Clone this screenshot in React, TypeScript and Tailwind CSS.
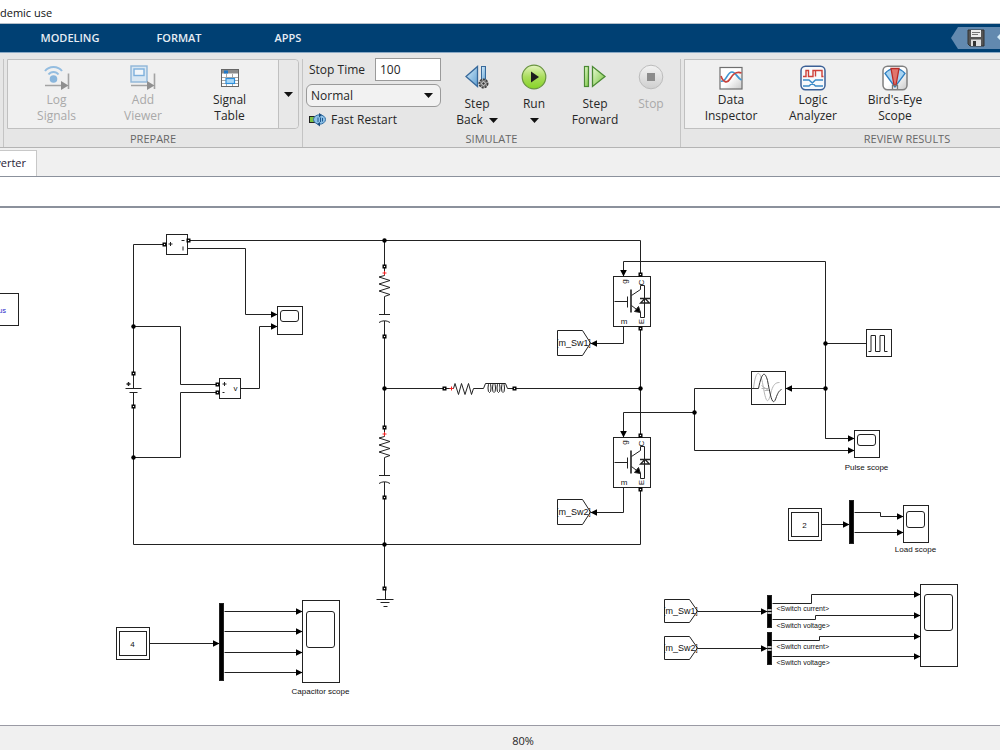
import type { ReactNode } from 'react';

function Caret() {
  return (
    <svg width="9" height="5" viewBox="0 0 9 5" aria-hidden="true">
      <path d="M0 0H9L4.5 5Z" fill="#111" />
    </svg>
  );
}

/* ---------- toolstrip icons ---------- */

function LogSignalsIcon() {
  return (
    <svg width="26" height="26" viewBox="0 0 26 26" fill="none">
      <g stroke="#94bde0" strokeWidth="2">
        <path d="M1 6C5 0.500 14 0.500 18 6" />
        <path d="M4.500 9.500C7 6 12 6 14.500 9.500" />
      </g>
      <circle cx="9.500" cy="14" r="3.800" fill="#8ab6dc" />
      <path d="M1 20.500H18M24.500 8.500V24" stroke="#a3a3a3" strokeWidth="1.600" />
      <path d="M17 16L24.500 20.500L17 25Z" fill="#8f8f8f" />
    </svg>
  );
}

function AddViewerIcon() {
  return (
    <svg width="26" height="26" viewBox="0 0 26 26" fill="none">
      <rect x="1" y="1" width="16" height="16" fill="#d8e7f3" stroke="#8fb6d8" strokeWidth="1.400" />
      <rect x="4" y="4" width="10" height="6.500" fill="#f1f6fa" stroke="#7db0dc" strokeWidth="1.400" />
      <path d="M1 20.500H18M24.500 8.500V24" stroke="#a3a3a3" strokeWidth="1.600" />
      <path d="M17 16L24.500 20.500L17 25Z" fill="#8f8f8f" />
    </svg>
  );
}

function SignalTableIcon() {
  return (
    <svg width="18" height="26" viewBox="0 0 18 26" fill="none">
      <rect x="0.500" y="4.500" width="17" height="17" fill="#fff" stroke="#666" />
      <rect x="1" y="5" width="16" height="3.500" fill="#8c8c8c" />
      <rect x="3" y="5.500" width="4" height="3" fill="#1f78c8" />
      <path d="M1 12.500H17M1 15.500H17M1 18.500H17M5.500 9V21M11.500 9V21" stroke="#a5a5a5" />
      <rect x="5" y="13.500" width="8.500" height="5" fill="#a9d8f8" stroke="#2d8fdc" strokeWidth="1.200" />
    </svg>
  );
}

function StepBackIcon() {
  return (
    <svg width="26" height="26" viewBox="0 0 26 26" fill="none">
      <defs>
        <linearGradient id="blueFace" x1="0" y1="0" x2="1" y2="1">
          <stop offset="0" stopColor="#d8eefb" />
          <stop offset="1" stopColor="#5f9fd2" />
        </linearGradient>
      </defs>
      <path d="M13.500 2.500V22.500L2 12.500Z" fill="url(#blueFace)" stroke="#37699b" strokeWidth="1.300" />
      <rect x="17.500" y="2.500" width="4" height="15" fill="url(#blueFace)" stroke="#37699b" />
      <circle cx="19.500" cy="19.500" r="4.200" fill="#b9b9b9" stroke="#3d3d3d" strokeWidth="1.600" strokeDasharray="2.200 0.900" />
      <circle cx="19.500" cy="19.500" r="2.800" fill="#d6d6d6" stroke="#555" />
      <circle cx="19.500" cy="19.500" r="1.200" fill="#333" />
    </svg>
  );
}

function RunIcon() {
  return (
    <svg width="26" height="26" viewBox="0 0 26 26" fill="none">
      <defs>
        <linearGradient id="runFace" x1="0" y1="0" x2="0" y2="1">
          <stop offset="0" stopColor="#e4f4c0" />
          <stop offset="0.500" stopColor="#aadd5c" />
          <stop offset="1" stopColor="#86d326" />
        </linearGradient>
      </defs>
      <circle cx="13" cy="13" r="11.800" fill="url(#runFace)" stroke="#6a9540" strokeWidth="1.200" />
      <path d="M10 7.500L18 13L10 18.500Z" fill="#1d1d1d" />
    </svg>
  );
}

function StepForwardIcon() {
  return (
    <svg width="26" height="26" viewBox="0 0 26 26" fill="none">
      <defs>
        <linearGradient id="greenFace" x1="0" y1="0" x2="1" y2="1">
          <stop offset="0" stopColor="#eafbd6" />
          <stop offset="1" stopColor="#76c33c" />
        </linearGradient>
      </defs>
      <rect x="2.500" y="2.500" width="4" height="20" fill="url(#greenFace)" stroke="#4b8a34" strokeWidth="1.200" />
      <path d="M10.500 2.500V22.500L23 12.500Z" fill="url(#greenFace)" stroke="#4b8a34" strokeWidth="1.300" />
    </svg>
  );
}

function StopIcon() {
  return (
    <svg width="26" height="26" viewBox="0 0 26 26" fill="none">
      <defs>
        <linearGradient id="stopFace" x1="0" y1="0" x2="0" y2="1">
          <stop offset="0" stopColor="#f3f3f3" />
          <stop offset="1" stopColor="#cfcfcf" />
        </linearGradient>
      </defs>
      <circle cx="13" cy="13" r="11.800" fill="url(#stopFace)" stroke="#bcbcbc" />
      <rect x="9" y="9" width="8" height="8" fill="#8c8c8c" />
    </svg>
  );
}

function FastRestartIcon() {
  return (
    <svg width="17" height="14" viewBox="0 0 17 14" fill="none">
      <rect x="0.500" y="3.500" width="5" height="6" fill="#7cc143" stroke="#222" />
      <ellipse cx="10.500" cy="6.500" rx="6" ry="4.700" fill="#8cbfe6" stroke="#2f6da3" />
      <path d="M10 0L13 2L10 4.500ZM11 9L8 11.300L11 13.500Z" fill="#1d4f80" />
      <path d="M9 4.500V9M11.500 4.500V9M13.500 5V8.500" stroke="#1f5a92" />
    </svg>
  );
}

function DataInspectorIcon() {
  return (
    <svg width="26" height="26" viewBox="0 0 26 26" fill="none">
      <defs>
        <linearGradient id="paper" x1="0" y1="0" x2="1" y2="1">
          <stop offset="0.500" stopColor="#fff" />
          <stop offset="1" stopColor="#c9c9c9" />
        </linearGradient>
      </defs>
      <rect x="2" y="2.500" width="22" height="21.500" fill="url(#paper)" stroke="#6f6f6f" strokeWidth="1.200" />
      <path d="M3 16C8 18 9 7 14 7C18 7 19 13 23.500 15" stroke="#3e96d2" strokeWidth="1.700" />
      <path d="M3 11C5 17 9 19 12 14C15 9 18 6 23.500 8" stroke="#c8433c" strokeWidth="1.700" />
    </svg>
  );
}

function LogicAnalyzerIcon() {
  return (
    <svg width="26" height="26" viewBox="0 0 26 26" fill="none">
      <rect x="1" y="1.200" width="24" height="23.600" rx="4.500" fill="#f7f9fb" stroke="#3c6096" strokeWidth="1.500" />
      <path d="M3 11.500H6V5.500H8.500V11.500H13V5.500H15.500M15.500 5.500V11.500M18 5.500H22V11.500H23.500M15.500 5.500H18" stroke="#cf4038" strokeWidth="1.400" />
      <path d="M3 15H9L15.500 21H23M3 21H9L15.500 15H23" stroke="#3c8bc8" strokeWidth="1.500" />
    </svg>
  );
}

function BirdsEyeIcon() {
  return (
    <svg width="26" height="26" viewBox="0 0 26 26" fill="none">
      <rect x="1" y="1.200" width="24" height="23.600" rx="4.500" fill="url(#paper)" stroke="#808080" strokeWidth="1.500" />
      <path d="M13 22L3 8.500C8 2 18 2 23 8.500Z" fill="#a8d4f2" stroke="#2f7fc0" strokeWidth="1.300" />
      <path d="M12 20L9 3.500H17L14 20Z" fill="#e0756c" stroke="#b92b26" strokeWidth="1.300" />
      <path d="M10.500 24V20.500H15.500V24" stroke="#777" strokeWidth="1.300" />
    </svg>
  );
}

/* ---------- toolstrip parts ---------- */

function GalleryItem({ icon, lines, disabled, width }: { icon: ReactNode; lines: string[]; disabled?: boolean; width: string }) {
  return (
    <button disabled={disabled} className={`flex flex-col items-center pt-1 text-[12px] leading-4 text-[#262626] disabled:text-[#a9a9a9] ${width}`}>
      <span className="flex h-7 items-center">{icon}</span>
      {lines.map((line) => (
        <span key={line}>{line}</span>
      ))}
    </button>
  );
}

function SimButton({ icon, first, second, disabled, menu, width }: { icon: ReactNode; first: string; second?: string; disabled?: boolean; menu?: boolean; width: string }) {
  return (
    <button disabled={disabled} className={`flex flex-col items-center text-[12px] leading-4 text-[#262626] disabled:text-[#a9a9a9] ${width}`}>
      <span className="mb-[5px] flex h-7 items-center">{icon}</span>
      <span>{first}</span>
      <span className="flex h-4 items-center gap-[6px]">
        {second}
        {menu && <Caret />}
      </span>
    </button>
  );
}

function Section({ title, className, children }: { title: string; className: string; children: ReactNode }) {
  return (
    <section className={`mt-[6px] flex shrink-0 flex-col border-l border-[#c4c4c4] ${className}`}>
      <div className="h-[73px]">{children}</div>
      <h2 className="pt-px text-center text-[11px] leading-4 text-[#666]">{title}</h2>
    </section>
  );
}

/* ---------- block diagram parts ---------- */

type Point = [number, number];

function Wire({ points }: { points: Point[] }) {
  return <polyline points={points.map((p) => p.join(',')).join(' ')} />;
}

function Arrow({ points }: { points: Point[] }) {
  const [x, y] = points[points.length - 1];
  const [px, py] = points[points.length - 2];
  const angle = (Math.atan2(y - py, x - px) * 180) / Math.PI;
  return (
    <>
      <Wire points={points} />
      <path d="M0 0L-6.500 -3.300V3.300Z" fill="#000" stroke="none" transform={`translate(${x} ${y}) rotate(${angle})`} />
    </>
  );
}

function Dot({ x, y }: { x: number; y: number }) {
  return <circle cx={x} cy={y} r="2.200" fill="#000" stroke="none" />;
}

function Port({ x, y }: { x: number; y: number }) {
  return <rect x={x - 1.3} y={y - 1.3} width="2.600" height="2.600" fill="#fff" stroke="#000" strokeWidth="1.400" />;
}

function Label({ x, y, children, anchor = 'middle', size = 8, color = '#111' }: { x: number; y: number; children: ReactNode; anchor?: 'middle' | 'start' | 'end'; size?: number; color?: string }) {
  return (
    <text x={x} y={y} fontSize={size} textAnchor={anchor} fill={color} stroke="none">
      {children}
    </text>
  );
}

function Scope({ x, y, w, h, screen }: { x: number; y: number; w: number; h: number; screen: [number, number, number, number] }) {
  return (
    <>
      <rect x={x} y={y} width={w} height={h} fill="#fff" />
      <rect x={screen[0]} y={screen[1]} width={screen[2]} height={screen[3]} rx="2.500" />
    </>
  );
}

function Constant({ x, y, value }: { x: number; y: number; value: string }) {
  return (
    <>
      <rect x={x} y={y} width="33" height="32" />
      <rect x={x + 3} y={y + 4} width="27" height="24" />
      <Label x={x + 16} y={y + 19}>{value}</Label>
    </>
  );
}

function RcBranch({ y }: { y: number }) {
  return (
    <g transform={`translate(384 ${y})`}>
      <path d="M0 0V9L-5.500 10.500L5.500 14L-5.500 17.500L5.500 21L-5.500 24.500L5.500 28L0 30V48M-5.500 48H5.500M-5.500 56Q0 52.500 5.500 56M0 54.500V70" />
      <path d="M-2 6.500H2M0 4.500V8.500" stroke="#e22" />
      <Port x={0} y={0} />
      <Port x={0} y={70} />
    </g>
  );
}

function Igbt({ y }: { y: number }) {
  return (
    <g transform={`translate(613 ${y})`}>
      <rect x="0" y="0" width="37" height="50" fill="#fff" />
      <path d="M1 25H14M14 20V31" />
      <path d="M17.500 13V36" strokeWidth="1.600" />
      <path d="M18 19L27 13V9H31V41H27V36L18 29" />
      <path d="M27 36L21 35L25 30Z" fill="#000" />
      <path d="M26.500 22H36.500M27 26.500H36L31.500 22Z" strokeWidth="1.300" />
      <g fontSize="8" fill="#111" stroke="none">
        <text transform="translate(13 5) rotate(-90)" textAnchor="middle">g</text>
        <text transform="translate(30 6) rotate(-90)" textAnchor="middle">C</text>
        <text x="10.500" y="47" textAnchor="middle">m</text>
        <text transform="translate(30 45) rotate(-90)" textAnchor="middle">E</text>
      </g>
      <Port x={27} y={-2} />
      <Port x={27} y={52} />
    </g>
  );
}

function Tag({ x, y, h, name, id }: { x: number; y: number; h: number; name: string; id: string }) {
  return (
    <g transform={`translate(${x} ${y})`}>
      <clipPath id={id}>
        <rect x="0" y="0" width="33" height={h} />
      </clipPath>
      <path d={`M0 0H25L33 ${h / 2}L25 ${h}H0Z`} fill="#fff" />
      <g clipPath={`url(#${id})`}>
        <Label x={16} y={h / 2 + 3} size={9}>{`[${name}]`}</Label>
      </g>
    </g>
  );
}

function BusSelector({ y }: { y: number }) {
  return (
    <>
      <rect x="767" y={y} width="4" height="32" fill="#000" />
      <path d={`M767 ${y + 14.5}H771M767 ${y + 17.5}H771`} stroke="#fff" strokeWidth="1.300" />
    </>
  );
}

function Diagram() {
  return (
    <svg className="block shrink-0" width="1000" height="517" viewBox="0 208 1000 517" role="img" aria-label="Converter block diagram" fontFamily="'Liberation Sans', Arial, sans-serif">
      <g transform="translate(0.500 0.500)" fill="none" stroke="#222" strokeWidth="1">
        <rect x="-30" y="293" width="48" height="32" />
        <Label x={-2} y={312} size={7} anchor="start" color="#2424c8">us</Label>

        <Wire points={[[164, 244], [133, 244], [133, 373]]} />
        <Wire points={[[133, 407], [133, 544], [640, 544], [640, 489]]} />
        <Wire points={[[189, 240], [640, 240], [640, 274]]} />
        <Wire points={[[133, 326], [180, 326], [180, 384], [216, 384]]} />
        <Wire points={[[133, 457], [180, 457], [180, 392], [216, 392]]} />
        <Arrow points={[[187, 248], [245, 248], [245, 314], [277, 314]]} />
        <Arrow points={[[240, 388], [259, 388], [259, 326], [277, 326]]} />

        <rect x="166" y="234" width="21" height="20" />
        <path d="M168 243.500H172M170 241.500V245.500M181 240H184M182.500 246V250" />
        <Port x={164} y={244} />
        <Port x={188} y={240} />

        <rect x="219" y="378" width="21" height="20" />
        <path d="M222 383.500H226M224 381.500V385.500M222 392H224" />
        <Label x={235} y={390}>v</Label>
        <Port x={217} y={384} />
        <Port x={217} y={392} />

        <path d="M133 374V388M125 388H141M129 392H137M133 392V407" />
        <path d="M126 383.500H130M128 381.500V385.500" strokeWidth="1.400" />
        <Port x={133} y={373} />
        <Port x={133} y={406} />

        <Scope x={277} y={306} w={25} h={28} screen={[280, 310, 18, 11]} />

        <Wire points={[[384, 240], [384, 266]]} />
        <Wire points={[[384, 336], [384, 427]]} />
        <Wire points={[[384, 497], [384, 588]]} />
        <RcBranch y={266} />
        <RcBranch y={427} />
        <path d="M385 588V599M376 599H393M380 602H389M383 606H387" />
        <Port x={384} y={588} />

        <Wire points={[[384, 388], [444, 388]]} />
        <Wire points={[[514, 388], [640, 388]]} />
        <path d="M444 388H453L454.500 383L458 394L461 383L464.500 394L468 383L471 394L473 388H483L485 383H505L507 388H514" />
        {[489, 493.5, 498, 502.5].map((x) => (
          <ellipse key={x} cx={x} cy="387.500" rx="1.500" ry="4.500" />
        ))}
        <path d="M449 388H453M451 386V390" stroke="#e22" />
        <Port x={444} y={388} />
        <Port x={514} y={388} />

        <Wire points={[[640, 328], [640, 435]]} />
        <Arrow points={[[825, 438], [825, 261], [623, 261], [623, 276]]} />
        <Arrow points={[[694, 412], [623, 412], [623, 437]]} />
        <Arrow points={[[623, 326], [623, 343], [590, 343]]} />
        <Arrow points={[[623, 487], [623, 512], [590, 512]]} />
        <Igbt y={276} />
        <Igbt y={437} />
        <Tag id="goto1" x={557} y={330} h={25} name="m_Sw1" />
        <Tag id="goto2" x={557} y={499} h={25} name="m_Sw2" />

        <Wire points={[[825, 343], [866, 343]]} />
        <Arrow points={[[825, 388], [785, 388]]} />
        <Arrow points={[[751, 388], [694, 388], [694, 450], [854, 450]]} />
        <Arrow points={[[825, 430], [825, 438], [854, 438]]} />
        <rect x="866" y="329" width="25" height="27" />
        <path d="M868 351H870.500V335H875V351H879.500V335H884V351H887" />
        <rect x="751" y="371" width="34" height="33" />
        <path d="M753 388C755 370 759 368 762 382C765 400 767 408 771 390C773 384 775 382 779 382M761 385L768 390M761 388H768M764 390H768" stroke="#b5b5b5" />
        <path d="M751 388H758C761 373 764 369 767 380C770 395 772 409 776 396C778 391 779 390 781 389" stroke="#333" />
        <Scope x={854} y={430} w={25} h={27} screen={[857, 434, 18, 11]} />
        <Label x={866} y={469}>Pulse scope</Label>

        <Constant x={788} y={508} value="2" />
        <Arrow points={[[821, 524], [849, 524]]} />
        <rect x="849" y="500" width="4" height="43" fill="#000" />
        <Arrow points={[[854, 512], [880, 512], [880, 516], [903, 516]]} />
        <Arrow points={[[854, 532], [903, 532]]} />
        <Scope x={903} y={505} w={25} h={37} screen={[906, 511, 18, 16]} />
        <Label x={915} y={551}>Load scope</Label>

        <Constant x={116} y={627} value="4" />
        <Arrow points={[[149, 643], [219, 643]]} />
        <rect x="219" y="603" width="4" height="77" fill="#000" />
        {[611, 631, 652, 672].map((y) => (
          <Arrow key={y} points={[[224, y], [302, y]]} />
        ))}
        <Scope x={302} y={600} w={37} h={82} screen={[306, 611, 28, 36]} />
        <Label x={320} y={693}>Capacitor scope</Label>

        <Tag id="from1" x={664} y={599} h={23} name="m_Sw1" />
        <Tag id="from2" x={664} y={636} h={23} name="m_Sw2" />
        <Arrow points={[[697, 611], [767, 611]]} />
        <Arrow points={[[697, 648], [767, 648]]} />
        <BusSelector y={595} />
        <BusSelector y={632} />
        <Arrow points={[[772, 603], [811, 603], [811, 594], [920, 594]]} />
        <Arrow points={[[772, 619], [815, 619], [815, 615], [920, 615]]} />
        <Arrow points={[[772, 640], [819, 640], [819, 636], [920, 636]]} />
        <Arrow points={[[772, 656], [920, 656]]} />
        <Label x={776} y={610} size={7} anchor="start">{'<Switch current>'}</Label>
        <Label x={776} y={627} size={7} anchor="start">{'<Switch voltage>'}</Label>
        <Label x={776} y={648} size={7} anchor="start">{'<Switch current>'}</Label>
        <Label x={776} y={664} size={7} anchor="start">{'<Switch voltage>'}</Label>
        <Scope x={920} y={584} w={37} h={82} screen={[924, 594, 28, 36]} />

        <Dot x={133} y={326} />
        <Dot x={133} y={457} />
        <Dot x={384} y={240} />
        <Dot x={384} y={388} />
        <Dot x={384} y={544} />
        <Dot x={640} y={388} />
        <Dot x={694} y={412} />
        <Dot x={825} y={343} />
        <Dot x={825} y={388} />
      </g>
    </svg>
  );
}

export default function App() {
  return (
    <div className="flex min-h-screen flex-col overflow-hidden bg-white font-['Open_Sans','Noto_Sans',sans-serif] text-[12px] text-[#262626]">
      <header className="flex h-6 items-center border-b border-[#b5bfc9]">
        <h1 className="pt-px text-[11px] leading-none whitespace-nowrap text-[#111]">demic use</h1>
      </header>

      <nav className="flex h-7 items-center bg-[#004073] text-[11px] font-semibold text-[#e6edf4]">
        <button className="w-[140px] text-center">MODELING</button>
        <button className="w-[78px] text-center">FORMAT</button>
        <button className="w-[140px] text-center">APPS</button>
        <div className="ml-auto flex h-[22px] w-[49px] items-center gap-3 overflow-hidden bg-[#6289af] pl-4 [clip-path:polygon(0_50%,7px_0,100%_0,100%_100%,7px_100%)]">
          <button aria-label="Save" className="shrink-0">
            <svg width="18" height="18" viewBox="0 0 18 18">
              <path d="M1 1H17V17H3L1 15Z" fill="#555" stroke="#333" />
              <rect x="4" y="1" width="10" height="7" fill="#eee" />
              <path d="M5 3.500H13M5 5.500H11" stroke="#777" />
              <rect x="4" y="10.500" width="10" height="6.500" fill="#ddd" />
              <rect x="6" y="12" width="3" height="5" fill="#333" />
            </svg>
          </button>
          <button aria-label="Undo" className="shrink-0">
            <svg width="12" height="12" viewBox="0 0 12 12">
              <path d="M0 5L5 0V3H12V7H5V10Z" fill="#d6ecf8" />
            </svg>
          </button>
        </div>
      </nav>

      <div className="flex h-24 border-t border-b border-t-[#8aa9c5] border-b-[#b4b4b4] bg-[#e6e6e6] pl-[3px]">
        <Section title="PREPARE" className="w-[299px] pr-[3px] pl-[3px]">
          <div className="flex h-[70px] rounded-r border border-[#c0c0c0] bg-[#f0f0f0] pl-[5px]">
            <GalleryItem width="w-[87px]" disabled icon={<LogSignalsIcon />} lines={['Log', 'Signals']} />
            <GalleryItem width="w-[86px]" disabled icon={<AddViewerIcon />} lines={['Add', 'Viewer']} />
            <GalleryItem width="w-[87px]" icon={<SignalTableIcon />} lines={['Signal', 'Table']} />
            <button aria-label="More prepare tools" className="ml-auto flex w-5 items-center justify-center rounded-r border-l border-[#c0c0c0] bg-[#e8e8e8]">
              <Caret />
            </button>
          </div>
        </Section>

        <Section title="SIMULATE" className="w-[378px] pr-[3px] pl-[3px]">
          <div className="flex">
            <div className="-mt-px flex w-[135px] flex-col gap-[3px]">
              <div className="flex items-center justify-between">
                <label htmlFor="stop-time" className="pl-[3px]">Stop Time</label>
                <input id="stop-time" defaultValue="100" className="h-[23px] w-[66px] border border-[#9a9a9a] bg-white px-1 text-[12px]" />
              </div>
              <div className="relative">
                <select aria-label="Simulation mode" defaultValue="Normal" className="block h-[23px] w-full appearance-none rounded-md border border-[#9a9a9a] bg-[#f2f2f2] px-1 text-[12px]">
                  <option>Normal</option>
                  <option>Accelerator</option>
                </select>
                <span className="pointer-events-none absolute top-[9px] right-2 block leading-none">
                  <Caret />
                </span>
              </div>
              <button className="flex h-5 items-center gap-[5px] pl-[3px]">
                <FastRestartIcon />
                Fast Restart
              </button>
            </div>
            <div className="flex pt-1 pl-1">
              <SimButton width="w-[64px]" icon={<StepBackIcon />} first="Step" second="Back" menu />
              <SimButton width="w-[50px]" icon={<RunIcon />} first="Run" menu />
              <SimButton width="w-[72px]" icon={<StepForwardIcon />} first="Step" second="Forward" />
              <SimButton width="w-[40px]" disabled icon={<StopIcon />} first="Stop" />
            </div>
          </div>
        </Section>

        <Section title="REVIEW RESULTS" className="w-[450px] pl-[3px]">
          <div className="flex h-[70px] border border-[#c0c0c0] bg-[#f0f0f0] pl-[5px]">
            <GalleryItem width="w-[82px]" icon={<DataInspectorIcon />} lines={['Data', 'Inspector']} />
            <GalleryItem width="w-[82px]" icon={<LogicAnalyzerIcon />} lines={['Logic', 'Analyzer']} />
            <GalleryItem width="w-[82px]" icon={<BirdsEyeIcon />} lines={["Bird's-Eye", 'Scope']} />
          </div>
        </Section>
      </div>

      <div className="flex h-[29px] items-end border-b border-[#8b919c] bg-[#f0f0f0]">
        <button className="flex h-[26px] w-[37px] items-center justify-end border-t border-r border-[#c8c8c8] bg-white pr-[10px] text-[11px] whitespace-nowrap text-[#2a2035]">
          verter
        </button>
      </div>
      <div className="h-[31px] border-b-2 border-[#8b919c] bg-white" />

      <main className="flex-1 overflow-hidden">
        <Diagram />
      </main>

      <footer className="flex h-[25px] items-center justify-center border-t border-[#9a9aa4] bg-[#f0f0f0] pt-1 pl-[46px]">
        <span className="text-[11px] leading-none">80%</span>
      </footer>
    </div>
  );
}
